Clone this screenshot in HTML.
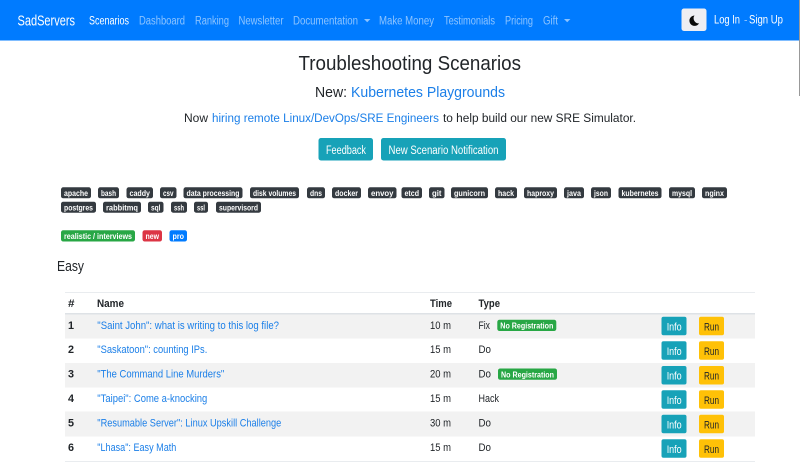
<!DOCTYPE html>
<html lang="en">
<head>
<meta charset="utf-8">
<title>SadServers - Troubleshooting Scenarios</title>
<style>
html,body{margin:0;padding:0;width:800px;height:462px;overflow:hidden;background:#fff}
svg{display:block;position:absolute;left:0;top:0;filter:blur(.25px)}
text{font-family:"Liberation Sans",sans-serif;font-size:11.5px;fill:#212529}
.nav{fill:rgba(255,255,255,.55)}
.w{fill:#fff}
.a{fill:#1b7fe8}
.b{font-weight:700}
.t{font-weight:700;font-size:8.5px;fill:#fff}
.s{font-size:10.8px}
.l{font-size:14.8px}
.m{font-size:12.2px}
</style>
</head>
<body>
<svg width="800" height="462" viewBox="0 0 800 462">
<!-- navbar -->
<rect width="800" height="40.5" fill="#007bff"/>
<text class="w l" x="17.5" y="25.5" textLength="57.5" lengthAdjust="spacingAndGlyphs">SadServers</text>
<text class="w" x="89" y="24.5" textLength="40" lengthAdjust="spacingAndGlyphs">Scenarios</text>
<text class="nav" x="139" y="24.5" textLength="46" lengthAdjust="spacingAndGlyphs">Dashboard</text>
<text class="nav" x="195" y="24.5" textLength="34" lengthAdjust="spacingAndGlyphs">Ranking</text>
<text class="nav" x="238.5" y="24.5" textLength="45" lengthAdjust="spacingAndGlyphs">Newsletter</text>
<text class="nav" x="293" y="24.5" textLength="65" lengthAdjust="spacingAndGlyphs">Documentation</text>
<path class="nav" d="M364 19h6.4l-3.2 3.2z" fill="rgba(255,255,255,.55)"/>
<text class="nav" x="379" y="24.5" textLength="55" lengthAdjust="spacingAndGlyphs">Make Money</text>
<text class="nav" x="444" y="24.5" textLength="51" lengthAdjust="spacingAndGlyphs">Testimonials</text>
<text class="nav" x="505" y="24.5" textLength="28" lengthAdjust="spacingAndGlyphs">Pricing</text>
<text class="nav" x="543" y="24.5" textLength="15" lengthAdjust="spacingAndGlyphs">Gift</text>
<path class="nav" d="M564 19h6.4l-3.2 3.2z" fill="rgba(255,255,255,.55)"/>
<rect x="681.5" y="8.5" width="25" height="22.5" rx="2.5" fill="#eeeef2"/>
<path d="M694.5 15.5a5.2 5.2 0 1 0 4.6 7.8a5 5 0 0 1-4.6-7.8z" fill="#0a0a0a"/>
<text class="w" x="714" y="23.3" textLength="26" lengthAdjust="spacingAndGlyphs">Log In</text>
<text class="nav" x="744" y="23.3" textLength="3.5" lengthAdjust="spacingAndGlyphs">-</text>
<text class="w" x="749" y="23.3" textLength="34" lengthAdjust="spacingAndGlyphs">Sign Up</text>
<rect x="799" y="0" width="1" height="96" fill="#999"/>

<!-- heading -->
<text x="298.5" y="70" style="font-size:20.5px" textLength="222.5" lengthAdjust="spacingAndGlyphs">Troubleshooting Scenarios</text>
<text class="l" x="315" y="97" textLength="32" lengthAdjust="spacingAndGlyphs">New:</text>
<text class="a l" x="351" y="97" textLength="154" lengthAdjust="spacingAndGlyphs">Kubernetes Playgrounds</text>
<text class="m" x="184" y="122" textLength="24" lengthAdjust="spacingAndGlyphs">Now</text>
<text class="a m" x="212" y="122" textLength="227" lengthAdjust="spacingAndGlyphs">hiring remote Linux/DevOps/SRE Engineers</text>
<text class="m" x="443" y="122" textLength="193" lengthAdjust="spacingAndGlyphs">to help build our new SRE Simulator.</text>

<!-- buttons -->
<rect x="318.5" y="138" width="54.5" height="22.5" rx="2.5" fill="#17a2b8"/>
<text class="w" x="326" y="154" textLength="40" lengthAdjust="spacingAndGlyphs">Feedback</text>
<rect x="381" y="138" width="125" height="22.5" rx="2.5" fill="#17a2b8"/>
<text class="w" x="388.5" y="154" textLength="110" lengthAdjust="spacingAndGlyphs">New Scenario Notification</text>

<!-- tags -->
<g fill="#343a40">
<rect x="61" y="187.3" width="30" height="11" rx="2.2"/>
<rect x="98" y="187.3" width="21" height="11" rx="2.2"/>
<rect x="126.5" y="187.3" width="26.5" height="11" rx="2.2"/>
<rect x="160" y="187.3" width="16.5" height="11" rx="2.2"/>
<rect x="183.5" y="187.3" width="59" height="11" rx="2.2"/>
<rect x="250" y="187.3" width="49" height="11" rx="2.2"/>
<rect x="307" y="187.3" width="18" height="11" rx="2.2"/>
<rect x="332" y="187.3" width="29" height="11" rx="2.2"/>
<rect x="368" y="187.3" width="28.5" height="11" rx="2.2"/>
<rect x="401.5" y="187.3" width="20.5" height="11" rx="2.2"/>
<rect x="429" y="187.3" width="15.5" height="11" rx="2.2"/>
<rect x="451" y="187.3" width="37" height="11" rx="2.2"/>
<rect x="495" y="187.3" width="22" height="11" rx="2.2"/>
<rect x="524" y="187.3" width="33" height="11" rx="2.2"/>
<rect x="564" y="187.3" width="20" height="11" rx="2.2"/>
<rect x="591" y="187.3" width="20" height="11" rx="2.2"/>
<rect x="618.5" y="187.3" width="43" height="11" rx="2.2"/>
<rect x="669" y="187.3" width="26" height="11" rx="2.2"/>
<rect x="702" y="187.3" width="25" height="11" rx="2.2"/>
<rect x="61" y="201.7" width="35" height="11" rx="2.2"/>
<rect x="103" y="201.7" width="38" height="11" rx="2.2"/>
<rect x="148" y="201.7" width="15.5" height="11" rx="2.2"/>
<rect x="171" y="201.7" width="16" height="11" rx="2.2"/>
<rect x="194" y="201.7" width="14" height="11" rx="2.2"/>
<rect x="216" y="201.7" width="45" height="11" rx="2.2"/>
</g>
<text class="t" x="64" y="196" textLength="24" lengthAdjust="spacingAndGlyphs">apache</text>
<text class="t" x="101" y="196" textLength="15" lengthAdjust="spacingAndGlyphs">bash</text>
<text class="t" x="129.5" y="196" textLength="20.5" lengthAdjust="spacingAndGlyphs">caddy</text>
<text class="t" x="163" y="196" textLength="10.5" lengthAdjust="spacingAndGlyphs">csv</text>
<text class="t" x="186.5" y="196" textLength="53" lengthAdjust="spacingAndGlyphs">data processing</text>
<text class="t" x="253" y="196" textLength="43" lengthAdjust="spacingAndGlyphs">disk volumes</text>
<text class="t" x="310" y="196" textLength="12" lengthAdjust="spacingAndGlyphs">dns</text>
<text class="t" x="335" y="196" textLength="23" lengthAdjust="spacingAndGlyphs">docker</text>
<text class="t" x="371" y="196" textLength="22.5" lengthAdjust="spacingAndGlyphs">envoy</text>
<text class="t" x="404.5" y="196" textLength="14.5" lengthAdjust="spacingAndGlyphs">etcd</text>
<text class="t" x="432" y="196" textLength="9.5" lengthAdjust="spacingAndGlyphs">git</text>
<text class="t" x="454" y="196" textLength="31" lengthAdjust="spacingAndGlyphs">gunicorn</text>
<text class="t" x="498" y="196" textLength="16" lengthAdjust="spacingAndGlyphs">hack</text>
<text class="t" x="527" y="196" textLength="27" lengthAdjust="spacingAndGlyphs">haproxy</text>
<text class="t" x="567" y="196" textLength="14" lengthAdjust="spacingAndGlyphs">java</text>
<text class="t" x="594" y="196" textLength="14" lengthAdjust="spacingAndGlyphs">json</text>
<text class="t" x="621.5" y="196" textLength="37" lengthAdjust="spacingAndGlyphs">kubernetes</text>
<text class="t" x="672" y="196" textLength="20" lengthAdjust="spacingAndGlyphs">mysql</text>
<text class="t" x="705" y="196" textLength="19" lengthAdjust="spacingAndGlyphs">nginx</text>
<text class="t" x="64" y="210.4" textLength="29" lengthAdjust="spacingAndGlyphs">postgres</text>
<text class="t" x="106" y="210.4" textLength="32" lengthAdjust="spacingAndGlyphs">rabbitmq</text>
<text class="t" x="151" y="210.4" textLength="9.5" lengthAdjust="spacingAndGlyphs">sql</text>
<text class="t" x="174" y="210.4" textLength="10" lengthAdjust="spacingAndGlyphs">ssh</text>
<text class="t" x="197" y="210.4" textLength="8" lengthAdjust="spacingAndGlyphs">ssl</text>
<text class="t" x="219" y="210.4" textLength="39" lengthAdjust="spacingAndGlyphs">supervisord</text>

<!-- level badges -->
<rect x="61" y="230.2" width="74" height="11.3" rx="2.2" fill="#28a745"/>
<text class="t" x="64" y="239" textLength="68" lengthAdjust="spacingAndGlyphs">realistic / interviews</text>
<rect x="142.5" y="230.2" width="19.5" height="11.3" rx="2.2" fill="#dc3545"/>
<text class="t" x="145.5" y="239" textLength="13.5" lengthAdjust="spacingAndGlyphs">new</text>
<rect x="169.5" y="230.2" width="17.5" height="11.3" rx="2.2" fill="#007bff"/>
<text class="t" x="172.5" y="239" textLength="11.5" lengthAdjust="spacingAndGlyphs">pro</text>

<text class="l" x="57" y="271" textLength="27" lengthAdjust="spacingAndGlyphs">Easy</text>

<!-- table -->
<rect x="65" y="292" width="690" height="1" fill="#e9ecef"/>
<rect x="65" y="313" width="690" height="1.5" fill="#dee2e6"/>
<rect x="65" y="314.5" width="690" height="24" fill="#f2f2f2"/>
<rect x="65" y="363" width="690" height="24.5" fill="#f2f2f2"/>
<rect x="65" y="411.5" width="690" height="25" fill="#f2f2f2"/>
<rect x="65" y="461" width="690" height="1" fill="#e9ecef"/>

<text class="b s" x="68" y="307" textLength="6.5" lengthAdjust="spacingAndGlyphs">#</text>
<text class="b s" x="97" y="307" textLength="27" lengthAdjust="spacingAndGlyphs">Name</text>
<text class="b s" x="430" y="307" textLength="22" lengthAdjust="spacingAndGlyphs">Time</text>
<text class="b s" x="478.5" y="307" textLength="21.5" lengthAdjust="spacingAndGlyphs">Type</text>

<text class="b s" x="68" y="329">1</text>
<text class="b s" x="68" y="353">2</text>
<text class="b s" x="68" y="377.5">3</text>
<text class="b s" x="68" y="402">4</text>
<text class="b s" x="68" y="426.5">5</text>
<text class="b s" x="68" y="451">6</text>

<text class="a s" x="97.3" y="329" textLength="181.7" lengthAdjust="spacingAndGlyphs">"Saint John": what is writing to this log file?</text>
<text class="a s" x="97.3" y="353" textLength="110" lengthAdjust="spacingAndGlyphs">"Saskatoon": counting IPs.</text>
<text class="a s" x="97.3" y="377.5" textLength="127" lengthAdjust="spacingAndGlyphs">"The Command Line Murders"</text>
<text class="a s" x="97.3" y="402" textLength="110" lengthAdjust="spacingAndGlyphs">"Taipei": Come a-knocking</text>
<text class="a s" x="97.3" y="426.5" textLength="184" lengthAdjust="spacingAndGlyphs">"Resumable Server": Linux Upskill Challenge</text>
<text class="a s" x="97.3" y="451" textLength="79" lengthAdjust="spacingAndGlyphs">"Lhasa": Easy Math</text>

<text class="s" x="430" y="329" textLength="21" lengthAdjust="spacingAndGlyphs">10 m</text>
<text class="s" x="430" y="353" textLength="21" lengthAdjust="spacingAndGlyphs">15 m</text>
<text class="s" x="430" y="377.5" textLength="21" lengthAdjust="spacingAndGlyphs">20 m</text>
<text class="s" x="430" y="402" textLength="21" lengthAdjust="spacingAndGlyphs">15 m</text>
<text class="s" x="430" y="426.5" textLength="21" lengthAdjust="spacingAndGlyphs">30 m</text>
<text class="s" x="430" y="451" textLength="21" lengthAdjust="spacingAndGlyphs">15 m</text>

<text class="s" x="478.5" y="329" textLength="11.5" lengthAdjust="spacingAndGlyphs">Fix</text>
<rect x="497.3" y="319.7" width="59" height="11.3" rx="2.2" fill="#28a745"/>
<text class="t" x="500.3" y="328.6" textLength="53" lengthAdjust="spacingAndGlyphs">No Registration</text>
<text class="s" x="478.5" y="353" textLength="12.5" lengthAdjust="spacingAndGlyphs">Do</text>
<text class="s" x="478.5" y="377.5" textLength="12.5" lengthAdjust="spacingAndGlyphs">Do</text>
<rect x="498" y="368.5" width="59" height="11.3" rx="2.2" fill="#28a745"/>
<text class="t" x="501" y="377.4" textLength="53" lengthAdjust="spacingAndGlyphs">No Registration</text>
<text class="s" x="478.5" y="402" textLength="20.5" lengthAdjust="spacingAndGlyphs">Hack</text>
<text class="s" x="478.5" y="426.5" textLength="12.5" lengthAdjust="spacingAndGlyphs">Do</text>
<text class="s" x="478.5" y="451" textLength="12.5" lengthAdjust="spacingAndGlyphs">Do</text>

<!-- row buttons -->
<g fill="#17a2b8">
<rect x="661.5" y="316.7" width="25" height="18.5" rx="2"/>
<rect x="661.5" y="341.2" width="25" height="18.5" rx="2"/>
<rect x="661.5" y="366" width="25" height="18.5" rx="2"/>
<rect x="661.5" y="390.2" width="25" height="18.5" rx="2"/>
<rect x="661.5" y="414.8" width="25" height="18.5" rx="2"/>
<rect x="661.5" y="439.3" width="25" height="18.5" rx="2"/>
</g>
<g fill="#ffc107">
<rect x="699" y="316.7" width="25" height="18.5" rx="2"/>
<rect x="699" y="341.2" width="25" height="18.5" rx="2"/>
<rect x="699" y="366" width="25" height="18.5" rx="2"/>
<rect x="699" y="390.2" width="25" height="18.5" rx="2"/>
<rect x="699" y="414.8" width="25" height="18.5" rx="2"/>
<rect x="699" y="439.3" width="25" height="18.5" rx="2"/>
</g>
<text class="w s" x="666.7" y="330.3" textLength="15" lengthAdjust="spacingAndGlyphs">Info</text>
<text class="w s" x="666.7" y="354.8" textLength="15" lengthAdjust="spacingAndGlyphs">Info</text>
<text class="w s" x="666.7" y="379.5" textLength="15" lengthAdjust="spacingAndGlyphs">Info</text>
<text class="w s" x="666.7" y="403.8" textLength="15" lengthAdjust="spacingAndGlyphs">Info</text>
<text class="w s" x="666.7" y="428.4" textLength="15" lengthAdjust="spacingAndGlyphs">Info</text>
<text class="w s" x="666.7" y="452.9" textLength="15" lengthAdjust="spacingAndGlyphs">Info</text>
<text class="s" x="704" y="330.3" textLength="15" lengthAdjust="spacingAndGlyphs">Run</text>
<text class="s" x="704" y="354.8" textLength="15" lengthAdjust="spacingAndGlyphs">Run</text>
<text class="s" x="704" y="379.5" textLength="15" lengthAdjust="spacingAndGlyphs">Run</text>
<text class="s" x="704" y="403.8" textLength="15" lengthAdjust="spacingAndGlyphs">Run</text>
<text class="s" x="704" y="428.4" textLength="15" lengthAdjust="spacingAndGlyphs">Run</text>
<text class="s" x="704" y="452.9" textLength="15" lengthAdjust="spacingAndGlyphs">Run</text>
</svg>
</body>
</html>
